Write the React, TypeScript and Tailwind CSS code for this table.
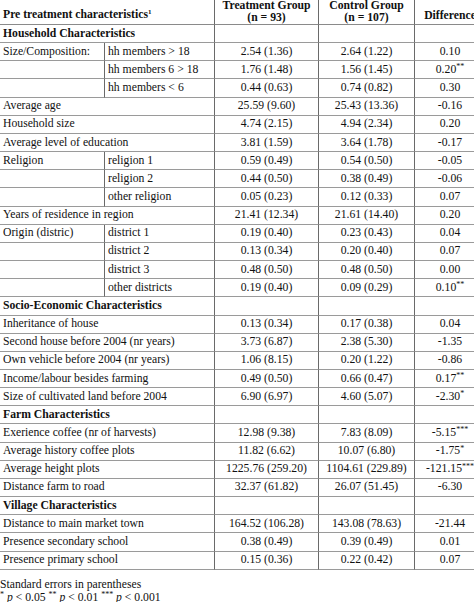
import React from "react";

type Row =
  | { kind: "section"; label: string }
  | { kind: "full"; label: string; t: string; c: string; d: string }
  | { kind: "sub"; label?: string; sub: string; t: string; c: string; d: string };

const rows: Row[] = [
  { kind: "section", label: "Household Characteristics" },
  { kind: "sub", label: "Size/Composition:", sub: "hh members > 18", t: "2.54 (1.36)", c: "2.64 (1.22)", d: "0.10" },
  { kind: "sub", sub: "hh members 6 > 18", t: "1.76 (1.48)", c: "1.56 (1.45)", d: "0.20**" },
  { kind: "sub", sub: "hh members < 6", t: "0.44 (0.63)", c: "0.74 (0.82)", d: "0.30" },
  { kind: "full", label: "Average age", t: "25.59 (9.60)", c: "25.43 (13.36)", d: "-0.16" },
  { kind: "full", label: "Household size", t: "4.74 (2.15)", c: "4.94 (2.34)", d: "0.20" },
  { kind: "full", label: "Average level of education", t: "3.81 (1.59)", c: "3.64 (1.78)", d: "-0.17" },
  { kind: "sub", label: "Religion", sub: "religion 1", t: "0.59 (0.49)", c: "0.54 (0.50)", d: "-0.05" },
  { kind: "sub", sub: "religion 2", t: "0.44 (0.50)", c: "0.38 (0.49)", d: "-0.06" },
  { kind: "sub", sub: "other religion", t: "0.05 (0.23)", c: "0.12 (0.33)", d: "0.07" },
  { kind: "full", label: "Years of residence in region", t: "21.41 (12.34)", c: "21.61 (14.40)", d: "0.20" },
  { kind: "sub", label: "Origin (distric)", sub: "district 1", t: "0.19 (0.40)", c: "0.23 (0.43)", d: "0.04" },
  { kind: "sub", sub: "district 2", t: "0.13 (0.34)", c: "0.20 (0.40)", d: "0.07" },
  { kind: "sub", sub: "district 3", t: "0.48 (0.50)", c: "0.48 (0.50)", d: "0.00" },
  { kind: "sub", sub: "other districts", t: "0.19 (0.40)", c: "0.09 (0.29)", d: "0.10**" },
  { kind: "section", label: "Socio-Economic Characteristics" },
  { kind: "full", label: "Inheritance of house", t: "0.13 (0.34)", c: "0.17 (0.38)", d: "0.04" },
  { kind: "full", label: "Second house before 2004 (nr years)", t: "3.73 (6.87)", c: "2.38 (5.30)", d: "-1.35" },
  { kind: "full", label: "Own vehicle before 2004 (nr years)", t: "1.06 (8.15)", c: "0.20 (1.22)", d: "-0.86" },
  { kind: "full", label: "Income/labour besides farming", t: "0.49 (0.50)", c: "0.66 (0.47)", d: "0.17**" },
  { kind: "full", label: "Size of cultivated land before 2004", t: "6.90 (6.97)", c: "4.60 (5.07)", d: "-2.30*" },
  { kind: "section", label: "Farm Characteristics" },
  { kind: "full", label: "Exerience coffee (nr of harvests)", t: "12.98 (9.38)", c: "7.83 (8.09)", d: "-5.15***" },
  { kind: "full", label: "Average history coffee plots", t: "11.82 (6.62)", c: "10.07 (6.80)", d: "-1.75*" },
  { kind: "full", label: "Average height plots", t: "1225.76 (259.20)", c: "1104.61 (229.89)", d: "-121.15***" },
  { kind: "full", label: "Distance farm to road", t: "32.37 (61.82)", c: "26.07 (51.45)", d: "-6.30" },
  { kind: "section", label: "Village Characteristics" },
  { kind: "full", label: "Distance to main market town", t: "164.52 (106.28)", c: "143.08 (78.63)", d: "-21.44" },
  { kind: "full", label: "Presence secondary school", t: "0.38 (0.49)", c: "0.39 (0.49)", d: "0.01" },
  { kind: "full", label: "Presence primary school", t: "0.15 (0.36)", c: "0.22 (0.42)", d: "0.07" },
];

const cell = "flex items-center border-b border-[#9a9a9a] whitespace-nowrap";
const vline = "border-r border-r-[#6a6a6a]";
const star = "text-[8px] top-[-0.45em]";

function Diff({ value }: { value: string }) {
  const m = value.match(/^(.*?)(\*+)$/);
  if (!m) return <span>{value}</span>;
  return (
    <span>
      {m[1]}
      <sup className={star}>{m[2]}</sup>
    </span>
  );
}

function Numbers({ t, c, d }: { t: string; c: string; d: string }) {
  return (
    <>
      <div className={`${cell} ${vline} justify-center`}>{t}</div>
      <div className={`${cell} ${vline} justify-center`}>{c}</div>
      <div className={`${cell} justify-center`}>
        <Diff value={d} />
      </div>
    </>
  );
}

export default function App() {
  return (
    <div className="w-[474px] h-[602px] overflow-hidden bg-white text-[#111111] [font-family:'Liberation_Serif','Times_New_Roman',serif] text-[11.7px] leading-[12px]">
      <div className="mt-[-1px] grid w-[485px] grid-cols-[105px_110px_104px_96px_70px] grid-rows-[26px_repeat(30,18.16px)]">
        <div className={`col-span-2 flex items-end border-b border-[#8a8a8a] pb-[3px] pl-[3px] font-bold ${vline}`}>
          <span>
            Pre treatment characteristics<sup className="text-[7px] top-[-0.6em]">1</sup>
          </span>
        </div>
        <div className={`flex flex-col items-center justify-end border-b border-[#8a8a8a] pb-[1px] font-bold leading-[11.5px] ${vline}`}>
          <span>Treatment Group</span>
          <span>(n = 93)</span>
        </div>
        <div className={`flex flex-col items-center justify-end border-b border-[#8a8a8a] pb-[1px] font-bold leading-[11.5px] ${vline}`}>
          <span>Control Group</span>
          <span>(n = 107)</span>
        </div>
        <div className="flex items-end justify-center border-b border-[#8a8a8a] pb-[2px] font-bold">Difference</div>

        {rows.map((r, i) => {
          if (r.kind === "section") {
            return (
              <React.Fragment key={i}>
                <div className={`${cell} ${vline} col-span-2 pl-[3px] font-bold`}>{r.label}</div>
                <div className={`${cell} ${vline}`} />
                <div className={`${cell} ${vline}`} />
                <div className={cell} />
              </React.Fragment>
            );
          }
          if (r.kind === "full") {
            return (
              <React.Fragment key={i}>
                <div className={`${cell} ${vline} col-span-2 pl-[3px]`}>{r.label}</div>
                <Numbers t={r.t} c={r.c} d={r.d} />
              </React.Fragment>
            );
          }
          return (
            <React.Fragment key={i}>
              <div className={`${cell} ${vline} pl-[3px]`}>{r.label ?? ""}</div>
              <div className={`${cell} ${vline} pl-[3px]`}>{r.sub}</div>
              <Numbers t={r.t} c={r.c} d={r.d} />
            </React.Fragment>
          );
        })}
      </div>

      <div className="mt-[8px] leading-[13px]">
        <div>Standard errors in parentheses</div>
        <div>
          <sup className={star}>*</sup> <i>p</i> &lt; 0.05 <sup className={star}>**</sup> <i>p</i> &lt; 0.01{" "}
          <sup className={star}>***</sup> <i>p</i> &lt; 0.001
        </div>
      </div>
    </div>
  );
}
